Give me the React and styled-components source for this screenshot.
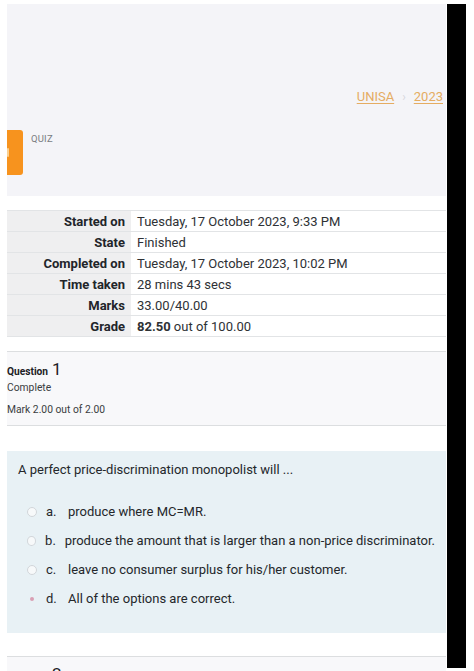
import React from "react";
import styled, { createGlobalStyle } from "styled-components";

const Global = createGlobalStyle`
  html, body { margin: 0; padding: 0; background: #fff; overflow: hidden; }
  body { font-family: Roboto, "Liberation Sans", Arial, sans-serif; color: #1d2125; }
`;

const Screen = styled.div`
  display: flex;
  width: 474px;
  height: 671px;
  overflow: hidden;
  background: #fff;
`;

const Main = styled.div`
  width: 439px;
  margin-left: 7px;
  padding-top: 4px;
  display: flex;
  flex-direction: column;
  & > * { flex-shrink: 0; }
`;

const Strip = styled.div`
  width: 19px;
  margin-left: 1px;
  margin-top: 4px;
  height: 664px;
  background: #000;
`;

const Header = styled.div`
  height: 192px;
  background: #f4f4f8;
  display: flex;
  flex-direction: column;
`;

const Crumbs = styled.nav`
  margin-top: 85px;
  padding-right: 3px;
  display: flex;
  justify-content: flex-end;
  align-items: center;
  gap: 8px;
  font-size: 13px;
  line-height: 16px;
`;

const Crumb = styled.a`
  color: #e5ac62;
  text-decoration: underline;
  text-underline-offset: 2px;
`;

const Sep = styled.span`
  color: #d6d6dc;
  font-size: 12px;
`;

const Title = styled.div`
  margin-top: 25px;
  display: flex;
  align-items: flex-start;
  gap: 8px;
`;

const Tile = styled.div`
  width: 16px;
  height: 45px;
  background: #f7931e;
  border-radius: 0 3px 3px 0;
  display: flex;
  align-items: center;
`;

const TileMark = styled.span`
  width: 2px;
  height: 9px;
  background: #fbd08f;
  border-radius: 1px;
`;

const Kind = styled.span`
  margin-top: 3px;
  font-size: 9.5px;
  color: #7a7d82;
  letter-spacing: 0.2px;
`;

const Table = styled.table`
  margin-top: 14px;
  border-collapse: collapse;
  width: 100%;
  font-size: 13px;
  border-top: 1px solid #e2e4e6;
`;

const Label = styled.th`
  width: 118px;
  background: #efeff0;
  text-align: right;
  font-weight: 700;
  padding: 0 6px 0 0;
  height: 20px;
  border-bottom: 1px solid #e2e4e6;
  color: #22252a;
`;

const Value = styled.td`
  padding: 0 0 0 6px;
  height: 20px;
  border-bottom: 1px solid #e2e4e6;
  color: #2e3135;
  white-space: nowrap;
  b { font-weight: 700; }
`;

const QInfo = styled.div`
  margin-top: ${p => p.$top}px;
  height: ${p => p.$h}px;
  box-sizing: border-box;
  background: #f8f8fa;
  border-top: 1px solid #dcdee0;
  border-bottom: 1px solid #dcdee0;
  padding: 9px 0 0 0;
  display: flex;
  flex-direction: column;
`;

const QTitle = styled.div`
  font-size: 10.2px;
  font-weight: 700;
  color: #1d2125;
  display: flex;
  align-items: baseline;
  gap: 4px;
  height: 16px;
  line-height: 16px;
  span { font-size: 17px; font-weight: 400; }
`;

const QMeta = styled.div`
  font-size: 10.3px;
  line-height: 12px;
  color: #3a3d41;
  margin-top: ${p => p.$top}px;
`;

const Formulation = styled.div`
  margin-top: 25px;
  height: 182px;
  box-sizing: border-box;
  background: #e8f1f5;
  padding: 11px 11px 0 11px;
`;

const Prompt = styled.div`
  font-size: 13px;
  line-height: 15px;
  color: #24272b;
`;

const Options = styled.div`
  margin-top: 25px;
  display: flex;
  flex-direction: column;
  gap: 10px;
`;

const Option = styled.div`
  display: flex;
  align-items: center;
  height: 19px;
  font-size: 13px;
  color: #24272b;
  white-space: nowrap;
`;

const Radio = styled.span`
  width: 10px;
  height: 10px;
  margin-left: 9px;
  margin-right: 9px;
  border-radius: 50%;
  box-sizing: border-box;
  border: ${p => (p.$checked ? "none" : "1px solid #d2d6da")};
  background: ${p => (p.$checked ? "transparent" : "#f7f9fa")};
  display: flex;
  align-items: center;
  justify-content: center;
  &::after {
    content: "";
    display: ${p => (p.$checked ? "block" : "none")};
    width: 4px;
    height: 4px;
    border-radius: 50%;
    background: #d9a0b4;
  }
`;

const Letter = styled.span`
  width: 22px;
`;

const Bold = styled.b``;

const rows = [
  ["Started on", "Tuesday, 17 October 2023, 9:33 PM"],
  ["State", "Finished"],
  ["Completed on", "Tuesday, 17 October 2023, 10:02 PM"],
  ["Time taken", "28 mins 43 secs"],
  ["Marks", "33.00/40.00"],
];

const options = [
  ["a.", "produce where MC=MR."],
  ["b.", "produce the amount that is larger than a non-price discriminator."],
  ["c.", "leave no consumer surplus for his/her customer."],
  ["d.", "All of the options are correct.", true],
];

export default function App() {
  return (
    <>
      <Global />
      <Screen>
        <Main>
          <Header>
            <Crumbs>
              <Crumb>UNISA</Crumb>
              <Sep>›</Sep>
              <Crumb>2023</Crumb>
            </Crumbs>
            <Title>
              <Tile><TileMark /></Tile>
              <Kind>QUIZ</Kind>
            </Title>
          </Header>
          <Table>
            <tbody>
              {rows.map(([k, v]) => (
                <tr key={k}>
                  <Label>{k}</Label>
                  <Value>{v}</Value>
                </tr>
              ))}
              <tr>
                <Label>Grade</Label>
                <Value><Bold>82.50</Bold> out of 100.00</Value>
              </tr>
            </tbody>
          </Table>
          <QInfo $top={14} $h={75}>
            <QTitle>Question <span>1</span></QTitle>
            <QMeta $top={5}>Complete</QMeta>
            <QMeta $top={10}>Mark 2.00 out of 2.00</QMeta>
          </QInfo>
          <Formulation>
            <Prompt>A perfect price-discrimination monopolist will ...</Prompt>
            <Options>
              {options.map(([l, t, c]) => (
                <Option key={l}>
                  <Radio $checked={c} />
                  <Letter>{l}</Letter>
                  {t}
                </Option>
              ))}
            </Options>
          </Formulation>
          <QInfo $top={23} $h={75}>
            <QTitle>Question <span>2</span></QTitle>
          </QInfo>
        </Main>
        <Strip />
      </Screen>
    </>
  );
}
